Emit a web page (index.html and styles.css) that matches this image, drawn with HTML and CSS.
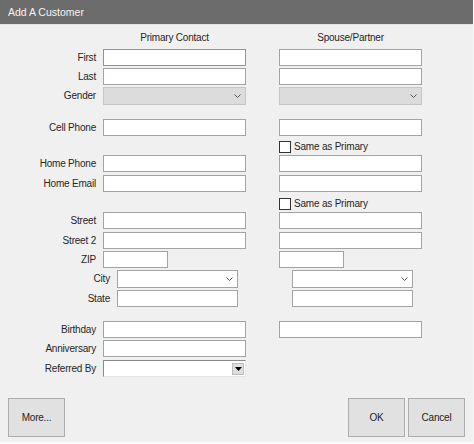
FILE: index.html
```html
<!DOCTYPE html>
<html>
<head>
    <title>Add A Customer</title>
    <link rel="stylesheet" href="styles.css">
</head>
<body>
    <div class="window">
        <div class="titlebar">Add A Customer</div>

        <div class="form">
            <div class="row heading">
                <span></span>
                <div class="col-title">Primary Contact</div>
                <div class="col-title">Spouse/Partner</div>
            </div>

            <div class="row">
                <label>First</label>
                <div class="field focus"></div>
                <div class="field"></div>
            </div>
            <div class="row">
                <label>Last</label>
                <div class="field"></div>
                <div class="field"></div>
            </div>
            <div class="row tall">
                <label>Gender</label>
                <div class="field combo disabled">
                    <svg width="7" height="4" viewBox="0 0 7 4"><polyline points="0.5,0.5 3.5,3.5 6.5,0.5" fill="none" stroke="#555" stroke-width="1"/></svg>
                </div>
                <div class="field combo disabled">
                    <svg width="7" height="4" viewBox="0 0 7 4"><polyline points="0.5,0.5 3.5,3.5 6.5,0.5" fill="none" stroke="#555" stroke-width="1"/></svg>
                </div>
            </div>

            <div class="row spaced">
                <label>Cell Phone</label>
                <div class="field"></div>
                <div class="field"></div>
            </div>
            <div class="row check-row">
                <span></span>
                <span></span>
                <div class="check"><span class="box"></span>Same as Primary</div>
            </div>
            <div class="row tall">
                <label>Home Phone</label>
                <div class="field"></div>
                <div class="field"></div>
            </div>
            <div class="row tall">
                <label>Home Email</label>
                <div class="field"></div>
                <div class="field"></div>
            </div>
            <div class="row check-row">
                <span></span>
                <span></span>
                <div class="check"><span class="box"></span>Same as Primary</div>
            </div>

            <div class="row tall">
                <label>Street</label>
                <div class="field"></div>
                <div class="field"></div>
            </div>
            <div class="row">
                <label>Street 2</label>
                <div class="field"></div>
                <div class="field"></div>
            </div>
            <div class="row">
                <label>ZIP</label>
                <div class="field zip"></div>
                <div class="field zip"></div>
            </div>
            <div class="row tall indent">
                <label>City</label>
                <div class="field combo">
                    <svg width="7" height="4" viewBox="0 0 7 4"><polyline points="0.5,0.5 3.5,3.5 6.5,0.5" fill="none" stroke="#555" stroke-width="1"/></svg>
                </div>
                <div class="field combo">
                    <svg width="7" height="4" viewBox="0 0 7 4"><polyline points="0.5,0.5 3.5,3.5 6.5,0.5" fill="none" stroke="#555" stroke-width="1"/></svg>
                </div>
            </div>
            <div class="row indent">
                <label>State</label>
                <div class="field"></div>
                <div class="field"></div>
            </div>

            <div class="row spaced">
                <label>Birthday</label>
                <div class="field"></div>
                <div class="field"></div>
            </div>
            <div class="row tall">
                <label>Anniversary</label>
                <div class="field"></div>
            </div>
            <div class="row">
                <label>Referred By</label>
                <div class="field dropdown">
                    <span class="drop-btn">
                        <svg width="7" height="4" viewBox="0 0 7 4"><polygon points="0,0 7,0 3.5,4" fill="#000"/></svg>
                    </span>
                </div>
            </div>
        </div>

        <div class="footer">
            <button>More...</button>
            <div class="actions">
                <button>OK</button>
                <button>Cancel</button>
            </div>
        </div>
    </div>
</body>
</html>
```

FILE: styles.css
```css
html, body {
    margin: 0;
    padding: 0;
    background-color: #f0f0f0;
}
body {
    font-family: "Liberation Sans", Arial, sans-serif;
    font-size: 10px;
    letter-spacing: -0.2px;
    color: #262626;
}
.window {
    width: 474px;
    height: 444px;
    box-sizing: border-box;
    background-color: #f0f0f0;
    border-right: 1px solid #fafafa;
    border-bottom: 2px solid #fafafa;
    display: flex;
    flex-direction: column;
}
.titlebar {
    height: 24px;
    line-height: 24px;
    background-color: #6c6c6c;
    color: #f4f4f4;
    font-size: 10.5px;
    letter-spacing: 0;
    padding-left: 8px;
    border-bottom: 1px solid #e4e4e4;
}
.form {
    display: flex;
    flex-direction: column;
}
.row {
    display: grid;
    grid-template-columns: 103px 176px 143px;
    align-items: start;
    height: 19px;
}
.row.tall {
    height: 20px;
}
.row.spaced {
    margin-top: 12px;
}
.row.heading {
    height: 24px;
    align-items: center;
}
.row.indent {
    grid-template-columns: 117px 175px 121px;
}
.row.check-row {
    height: 17px;
}
.col-title {
    width: 143px;
    text-align: center;
}
label {
    line-height: 17px;
    text-align: right;
    padding-right: 7px;
}
.field {
    box-sizing: border-box;
    width: 143px;
    height: 17px;
    background-color: #fff;
    border: 1px solid #a3a3a3;
}
.field.focus {
    border-color: #5c9fe0;
}
.field.zip {
    width: 65px;
}
.indent .field {
    width: 121px;
}
.combo {
    height: 18px;
    display: flex;
    align-items: center;
    justify-content: flex-end;
    padding-right: 4px;
}
.combo.disabled {
    background-color: #dcdcdc;
    border-color: #c6c6c6;
}
.dropdown {
    display: flex;
    align-items: center;
    justify-content: flex-end;
    padding-right: 1px;
    border-color: #8a8a8a #e6e6e6 #e6e6e6 #8a8a8a;
}
.drop-btn {
    box-sizing: border-box;
    width: 12px;
    height: 12px;
    background-color: #dedede;
    border: 1px solid #bdbdbd;
    display: flex;
    align-items: center;
    justify-content: center;
}
.check {
    display: flex;
    align-items: center;
    height: 17px;
    gap: 3px;
}
.box {
    box-sizing: border-box;
    width: 12px;
    height: 12px;
    background-color: #fff;
    border: 1px solid #333;
}
.footer {
    display: flex;
    justify-content: space-between;
    padding: 0 8px 0 8px;
    margin-top: 19px;
}
.actions {
    display: flex;
    gap: 3px;
}
button {
    width: 57px;
    height: 39px;
    background-color: #e1e1e1;
    border: 1px solid #adadad;
    font-family: "Liberation Sans", Arial, sans-serif;
    font-size: 10px;
    letter-spacing: -0.2px;
    color: #1e1e1e;
    padding: 0;
}
```
